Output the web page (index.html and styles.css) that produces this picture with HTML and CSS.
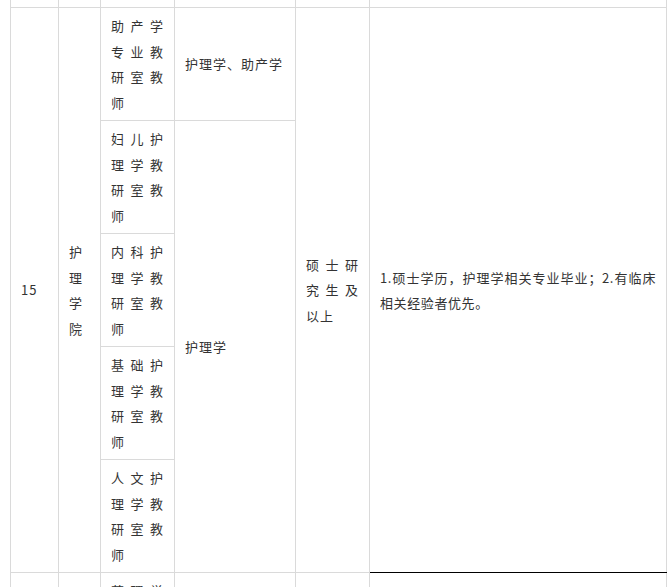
FILE: index.html
```html
<!DOCTYPE html>
<html lang="zh-CN">
<head>
<meta charset="utf-8">
<title>招聘岗位表</title>
<link rel="stylesheet" href="styles.css">
</head>
<body>
<table class="jobs">
  <colgroup>
    <col class="c1"><col class="c2"><col class="c3"><col class="c4"><col class="c5"><col class="c6">
  </colgroup>
  <tbody>
    <tr class="prev">
      <td></td><td></td><td></td><td></td><td></td><td></td>
    </tr>
    <tr class="sub">
      <td rowspan="5">15</td>
      <td rowspan="5">护理学院</td>
      <td>助产学专业教研室教师</td>
      <td>护理学、助产学</td>
      <td rowspan="5">硕士研究生及以上</td>
      <td rowspan="5" class="req">1.硕士学历，护理学相关专业毕业；2.有临床相关经验者优先。</td>
    </tr>
    <tr class="sub">
      <td>妇儿护理学教研室教师</td>
      <td rowspan="4">护理学</td>
    </tr>
    <tr class="sub">
      <td>内科护理学教研室教师</td>
    </tr>
    <tr class="sub">
      <td>基础护理学教研室教师</td>
    </tr>
    <tr class="sub">
      <td>人文护理学教研室教师</td>
    </tr>
    <tr class="sub next">
      <td></td>
      <td></td>
      <td>药理学教研室教师</td>
      <td></td>
      <td></td>
      <td></td>
    </tr>
  </tbody>
</table>
</body>
</html>
```
FILE: styles.css
```css
html, body {
  margin: 0;
  padding: 0;
  background: #ffffff;
}

.jobs {
  margin-left: 10px;
  width: 656px;
  table-layout: fixed;
  border-collapse: collapse;
  font-family: "Noto Sans CJK SC", "Noto Sans", sans-serif;
  font-size: 13px;
  letter-spacing: 1px;
  color: #333333;
}

.c1 { width: 48px; }
.c2 { width: 42px; }
.c3 { width: 74px; }
.c4 { width: 121px; }
.c5 { width: 74px; }
.c6 { width: 297px; }

.jobs td {
  border: 1px solid #dadada;
  padding: 5px 10px;
  line-height: 25.5px;
  text-align: justify;
  vertical-align: middle;
  word-break: break-all;
}

.prev td {
  border-top: none;
  padding: 0;
  height: 7px;
  line-height: 0;
}

.sub td {
  height: 102px;
}

.jobs td.req {
  padding-right: 10px;
  letter-spacing: 0.6px;
  border-bottom: 1px solid #000000;
}

.next td {
  height: 160px;
  vertical-align: top;
}
```
